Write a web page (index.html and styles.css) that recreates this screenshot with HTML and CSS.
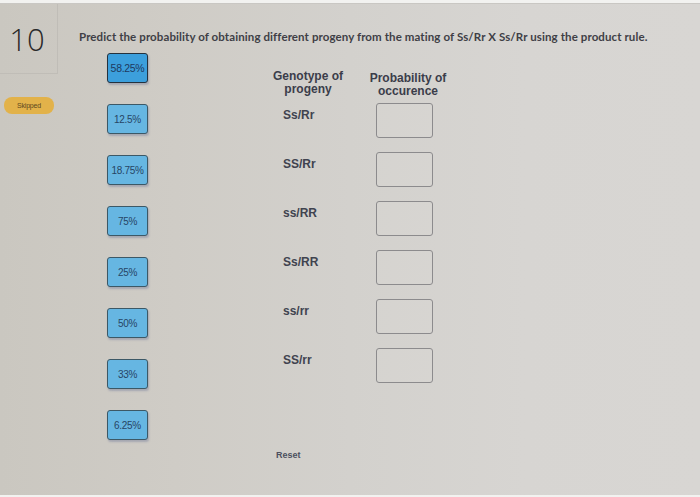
FILE: index.html
```html
<!DOCTYPE html>
<html>
<head>
<meta charset="utf-8">
<link rel="stylesheet" href="styles.css">
</head>
<body>
<div class="screen">
  <div class="side">
    <div class="num-box">10</div>
    <div class="skipped">Skipped</div>
  </div>
  <div class="main">
    <p class="question">Predict the probability of obtaining different progeny from the mating of Ss/Rr X Ss/Rr using the product rule.</p>
    <div class="content">
      <div class="choices">
        <div class="chip chip-active">58.25%</div>
        <div class="chip">12.5%</div>
        <div class="chip">18.75%</div>
        <div class="chip">75%</div>
        <div class="chip">25%</div>
        <div class="chip">50%</div>
        <div class="chip">33%</div>
        <div class="chip">6.25%</div>
      </div>
      <div class="table">
        <div class="thead">
          <div class="head head-geno">Genotype of<br>progeny</div>
          <div class="head head-prob">Probability of<br>occurence</div>
        </div>
        <div class="rows">
          <div class="row"><div class="geno">Ss/Rr</div><div class="cell"><div class="drop"></div></div></div>
          <div class="row"><div class="geno">SS/Rr</div><div class="cell"><div class="drop"></div></div></div>
          <div class="row"><div class="geno">ss/RR</div><div class="cell"><div class="drop"></div></div></div>
          <div class="row"><div class="geno">Ss/RR</div><div class="cell"><div class="drop"></div></div></div>
          <div class="row"><div class="geno">ss/rr</div><div class="cell"><div class="drop"></div></div></div>
          <div class="row"><div class="geno">SS/rr</div><div class="cell"><div class="drop"></div></div></div>
        </div>
        <div class="reset">Reset</div>
      </div>
    </div>
  </div>
</div>
</body>
</html>
```
FILE: styles.css
```css
html, body {
  margin: 0;
  padding: 0;
}
body {
  width: 700px;
  height: 497px;
  overflow: hidden;
  background: #f2f2f0;
}
.screen {
  width: 700px;
  height: 491px;
  margin-top: 3px;
  display: flex;
  border-top: 1px solid #c9c7c3;
  background: linear-gradient(90deg, #cac7c0 0%, #cfccc6 25%, #d3d1cd 50%, #d7d5d2 75%, #d8d6d3 100%);
  font-family: "Liberation Sans", Arial, sans-serif;
}
.side {
  width: 58px;
  display: flex;
  flex-direction: column;
}
.num-box {
  height: 69px;
  border-right: 1px solid #c0bdb7;
  border-bottom: 1px solid #c0bdb7;
  display: flex;
  align-items: center;
  justify-content: center;
  font-family: "Open Sans", sans-serif;
  font-weight: 300;
  font-size: 31px;
  color: #2a2a2a;
  padding-right: 3px;
}
.skipped {
  margin: 23px 0 0 4px;
  width: 50px;
  height: 17px;
  border-radius: 8px;
  background: #e2b24a;
  color: #5e4820;
  font-size: 7px;
  display: flex;
  align-items: center;
  justify-content: center;
  letter-spacing: -0.2px;
}
.main {
  flex: 1;
  padding-left: 21px;
}
.question {
  margin: 26px 0 0 0;
  font-family: Lato, sans-serif;
  font-weight: 700;
  font-size: 11.5px;
  line-height: 14px;
  color: #3f3f46;
  letter-spacing: 0.1px;
  white-space: nowrap;
}
.content {
  display: flex;
  margin-top: 9px;
}
.choices {
  margin-left: 28px;
  display: flex;
  flex-direction: column;
  gap: 21px;
}
.chip {
  width: 39px;
  height: 28px;
  border: 1px solid #3c5866;
  border-radius: 3px;
  background: #66b6e2;
  color: #264565;
  font-size: 10px;
  display: flex;
  align-items: center;
  justify-content: center;
  box-shadow: 1px 2px 2px rgba(90, 100, 140, 0.35);
  letter-spacing: -0.3px;
}
.chip-active {
  background: #3c9fdc;
  border-color: #25323e;
  color: #1e3a60;
  font-size: 10.5px;
}
.table {
  margin-left: 107px;
  padding-top: 17px;
  display: flex;
  flex-direction: column;
  color: #3b3d4a;
}
.thead {
  display: flex;
  height: 26px;
  margin-bottom: 7px;
}
.head {
  font-weight: 700;
  font-size: 12px;
  line-height: 13px;
  text-align: center;
}
.head-geno {
  width: 106px;
}
.head-prob {
  width: 94px;
  padding-top: 2px;
}
.rows {
  display: flex;
  flex-direction: column;
  gap: 14px;
}
.row {
  display: flex;
  height: 35px;
}
.geno {
  width: 78px;
  font-weight: 700;
  font-size: 12px;
  line-height: 14px;
  padding: 5px 0 0 28px;
  color: #40434f;
}
.cell {
  width: 94px;
  display: flex;
  justify-content: center;
  padding-right: 8px;
  box-sizing: border-box;
}
.drop {
  width: 55px;
  height: 33px;
  border: 1px solid #8c8b8d;
  border-radius: 3px;
  background: rgba(255, 255, 255, 0.06);
}
.reset {
  margin-top: 67px;
  padding-left: 21px;
  font-weight: 700;
  font-size: 9px;
  line-height: 11px;
  color: #4c4f5e;
}
```
